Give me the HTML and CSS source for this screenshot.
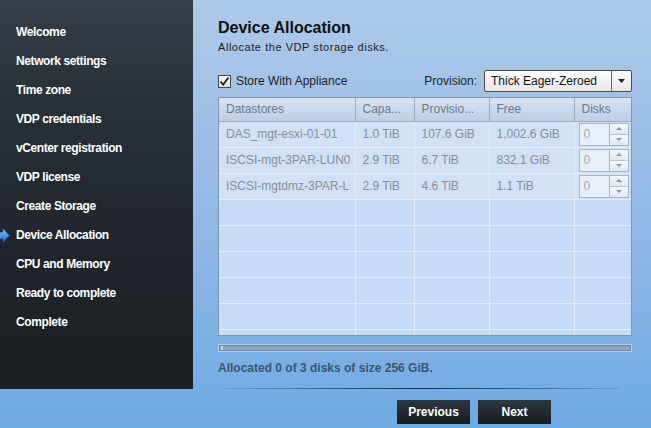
FILE: index.html
```html
<!DOCTYPE html>
<html lang="en">
<head>
  <meta charset="UTF-8" />
  <title>VDP Configuration - Device Allocation</title>
  <link rel="stylesheet" href="styles.css">
</head>
<body>
  <div class="wizard">

    <!-- Steps -->
    <ul class="steps">
      <li>Welcome</li>
      <li>Network settings</li>
      <li>Time zone</li>
      <li>VDP credentials</li>
      <li>vCenter registration</li>
      <li>VDP license</li>
      <li>Create Storage</li>
      <li class="current">
        <svg class="marker" width="10" height="15" viewBox="0 0 10 15">
          <defs>
            <linearGradient id="arr" x1="0" y1="0" x2="0" y2="1">
              <stop offset="0" stop-color="#9ccaff"/>
              <stop offset="0.5" stop-color="#4f93ee"/>
              <stop offset="1" stop-color="#2a66c2"/>
            </linearGradient>
          </defs>
          <path d="M-1 4 H3 V0.5 L9.5 7.5 L3 14.5 V11 H-1 Z" fill="url(#arr)" stroke="#1d4f9a" stroke-width="0.7"/>
        </svg>
        Device Allocation
      </li>
      <li>CPU and Memory</li>
      <li>Ready to complete</li>
      <li>Complete</li>
    </ul>

    <div class="main">
      <div class="content">
        <h1>Device Allocation</h1>
        <p class="subtitle">Allocate the VDP storage disks.</p>

        <div class="options">
          <label class="check">
            <span class="box">
              <svg width="11" height="11" viewBox="0 0 11 11"><path d="M1.5 5.5 L4.2 8.5 L9.5 1.5" fill="none" stroke="#222" stroke-width="1.8"/></svg>
            </span>
            Store With Appliance
          </label>
          <div class="provision">
            <span>Provision:</span>
            <div class="select">
              <span class="select-value">Thick Eager-Zeroed</span>
              <span class="select-btn"><svg width="7" height="4" viewBox="0 0 7 4"><path d="M0 0 H7 L3.5 4 Z" fill="#222"/></svg></span>
            </div>
          </div>
        </div>

        <div class="grid">
          <table>
            <colgroup>
              <col style="width:136px"><col style="width:59px"><col style="width:75px"><col style="width:85px"><col>
            </colgroup>
            <thead>
              <tr><th>Datastores</th><th>Capa...</th><th>Provisio...</th><th>Free</th><th>Disks</th></tr>
            </thead>
            <tbody>
              <tr>
                <td><div class="clip">DAS_mgt-esxi-01-01</div></td><td>1.0 TiB</td><td>107.6 GiB</td><td>1,002.6 GiB</td>
                <td><div class="spin"><span class="spin-val">0</span><span class="spin-btns"><i class="up"></i><i class="down"></i></span></div></td>
              </tr>
              <tr>
                <td><div class="clip">ISCSI-mgt-3PAR-LUN01</div></td><td>2.9 TiB</td><td>6.7 TiB</td><td>832.1 GiB</td>
                <td><div class="spin"><span class="spin-val">0</span><span class="spin-btns"><i class="up"></i><i class="down"></i></span></div></td>
              </tr>
              <tr>
                <td><div class="clip">ISCSI-mgtdmz-3PAR-LUN01</div></td><td>2.9 TiB</td><td>4.6 TiB</td><td>1.1 TiB</td>
                <td><div class="spin"><span class="spin-val">0</span><span class="spin-btns"><i class="up"></i><i class="down"></i></span></div></td>
              </tr>
              <tr class="empty"><td></td><td></td><td></td><td></td><td></td></tr>
              <tr class="empty"><td></td><td></td><td></td><td></td><td></td></tr>
              <tr class="empty"><td></td><td></td><td></td><td></td><td></td></tr>
              <tr class="empty"><td></td><td></td><td></td><td></td><td></td></tr>
              <tr class="empty"><td></td><td></td><td></td><td></td><td></td></tr>
              <tr class="empty"><td></td><td></td><td></td><td></td><td></td></tr>
            </tbody>
          </table>
        </div>

        <div class="hscroll"><span class="thumb"></span></div>

        <p class="status">Allocated 0 of 3 disks of size 256 GiB.</p>
      </div>

      <div class="rule"></div>

      <div class="buttons">
        <button class="btn">Previous</button>
        <button class="btn">Next</button>
      </div>
    </div>
  </div>
</body>
</html>
```

FILE: styles.css
```css
* {
  box-sizing: border-box;
  margin: 0;
  padding: 0;
}

html, body {
  width: 651px;
  height: 428px;
  overflow: hidden;
}

body {
  font-family: 'Liberation Sans', Arial, sans-serif;
  font-size: 12px;
  color: #222;
  background: linear-gradient(#adc9e8, #8cb6e6 60%, #6eaae4);
}

.wizard {
  display: flex;
  align-items: flex-start;
  height: 428px;
}

/* Left step list */
.steps {
  list-style: none;
  width: 193px;
  height: 389px;
  padding-top: 18px;
  background: linear-gradient(#353e48, #2a3139 25%, #22282e 55%, #1b1f24);
}

.steps li {
  position: relative;
  height: 29px;
  line-height: 29px;
  padding-left: 16px;
  color: #fff;
  font-weight: bold;
  font-size: 12px;
  letter-spacing: -0.4px;
}

.steps .marker {
  position: absolute;
  left: 0;
  top: 7px;
}

/* Right side */
.main {
  flex: 1;
  display: flex;
  flex-direction: column;
  height: 428px;
}

.content {
  padding: 18px 19px 0 25px;
}

h1 {
  font-size: 16px;
  line-height: 20px;
  color: #111;
}

.subtitle {
  margin-top: 2px;
  font-size: 11px;
  line-height: 14px;
  letter-spacing: 0.55px;
  color: #1e1e1e;
}

.options {
  display: flex;
  justify-content: space-between;
  align-items: center;
  height: 22px;
  margin-top: 16px;
}

.check {
  display: flex;
  align-items: center;
  gap: 5px;
  color: #1e1e1e;
}

.check .box {
  display: flex;
  align-items: center;
  justify-content: center;
  width: 13px;
  height: 13px;
  border: 1px solid #4a4a4a;
  background: linear-gradient(#f4f4f4, #dcdcdc);
}

.provision {
  display: flex;
  align-items: center;
  gap: 7px;
  color: #1e1e1e;
}

.select {
  display: flex;
  width: 148px;
  height: 22px;
  border: 1px solid #4d4d4d;
  border-radius: 2px;
  background: linear-gradient(#fdfdfd, #e6e6e6);
}

.select-value {
  flex: 1;
  padding-left: 6px;
  line-height: 20px;
  color: #111;
}

.select-btn {
  display: flex;
  align-items: center;
  justify-content: center;
  width: 20px;
  border-left: 1px solid #6a6a6a;
}

/* Data grid */
.grid {
  margin-top: 5px;
  height: 239px;
  border: 1px solid #8697a9;
  overflow: hidden;
  background: #c5dbf5;
}

table {
  width: 100%;
  border-collapse: collapse;
  table-layout: fixed;
}

th {
  height: 23px;
  padding-left: 7px;
  text-align: left;
  font-weight: normal;
  color: #6e7a87;
  background: linear-gradient(#d6e3f1, #bccee3);
  border-right: 1px solid #9aacbf;
  border-bottom: 1px solid #9aacbf;
  white-space: nowrap;
  overflow: hidden;
}

th:last-child {
  border-right: none;
}

td {
  height: 26px;
  padding: 0 5px 0 7px;
  color: #858f9a;
  background: #d0e0f5;
  border-right: 1px solid #e2ebf7;
  border-bottom: 1px solid #e2ebf7;
  white-space: nowrap;
  overflow: hidden;
}

td:last-child {
  border-right: none;
  padding: 0 0 0 4px;
}

.clip {
  overflow: hidden;
}

.empty td {
  background: #c6dbf5;
}

.spin {
  display: flex;
  width: 50px;
  height: 23px;
  border: 1px solid #a8b5c3;
  background: #e6eefa;
}

.spin-val {
  flex: 1;
  padding-left: 4px;
  line-height: 21px;
  color: #a3abb4;
}

.spin-btns {
  display: flex;
  flex-direction: column;
  width: 19px;
  border-left: 1px solid #a8b5c3;
}

.spin-btns i {
  flex: 1;
  display: flex;
  align-items: center;
  justify-content: center;
  background: linear-gradient(#f6f9fd, #dde6f1);
}

.spin-btns i + i {
  border-top: 1px solid #b7c3d0;
}

.spin-btns i::after {
  content: '';
  border-left: 3px solid transparent;
  border-right: 3px solid transparent;
}

.spin-btns .up::after {
  border-bottom: 3px solid #8b949e;
}

.spin-btns .down::after {
  border-top: 3px solid #8b949e;
}

.hscroll {
  position: relative;
  margin-top: 8px;
  height: 8px;
  border: 1px solid #b9cde3;
  background: linear-gradient(#7e98b5, #9bb2ca);
  box-shadow: inset 0 0 0 1px #6d87a4;
}

.hscroll .thumb {
  position: absolute;
  left: 2px;
  top: 1px;
  width: 2px;
  height: 4px;
  background: #c8d7e7;
}

.status {
  margin-top: 8px;
  line-height: 16px;
  font-weight: bold;
  color: #3b5571;
}

.rule {
  height: 1px;
  margin: 12px 31px 0 32px;
  background: linear-gradient(to right, rgba(40, 55, 75, 0.15), #1f2a36 50%, rgba(40, 55, 75, 0.15));
}

.buttons {
  display: flex;
  gap: 8px;
  margin-top: 11px;
  padding-left: 204px;
}

.btn {
  width: 73px;
  height: 24px;
  border: none;
  font-family: 'Liberation Sans', Arial, sans-serif;
  font-size: 12px;
  font-weight: bold;
  color: #fff;
  background: linear-gradient(#30373f, #181c20);
  cursor: pointer;
}
```
